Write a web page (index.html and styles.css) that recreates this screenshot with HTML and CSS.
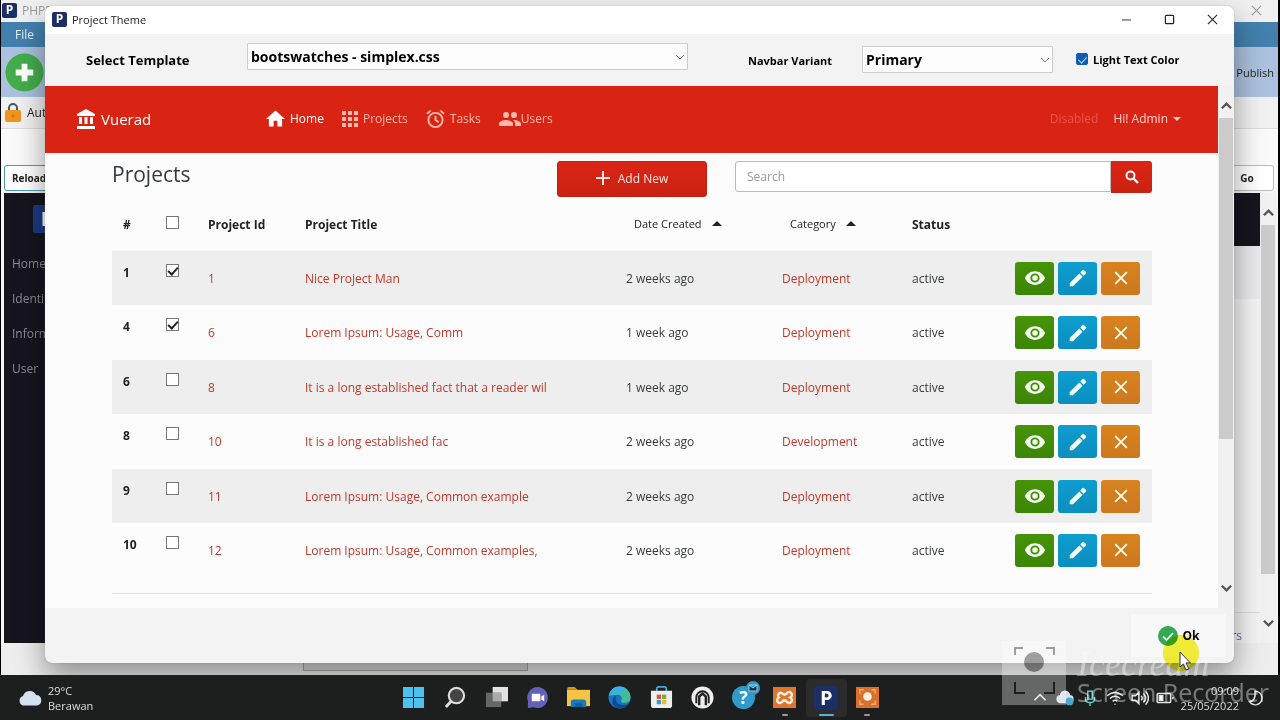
FILE: index.html
```html
<!DOCTYPE html>
<html lang="en">
<head>
  <meta charset="UTF-8" />
  <meta name="viewport" content="width=device-width, initial-scale=1.0" />
  <title>Project Theme</title>
  <link rel="stylesheet" href="styles.css">
</head>
<body>
  <!-- Shared icons -->
  <svg class="sprite" aria-hidden="true">
    <symbol id="i-eye" viewBox="0 0 24 24"><path d="M12 4.500C7 4.500 2.700 7.600 1 12c1.700 4.400 6 7.500 11 7.500s9.300-3.100 11-7.500c-1.700-4.400-6-7.500-11-7.500zM12 17a5 5 0 1 1 0-10 5 5 0 0 1 0 10zm0-8a3 3 0 1 0 0 6 3 3 0 0 0 0-6z"/></symbol>
    <symbol id="i-pencil" viewBox="0 0 24 24"><path d="M3 17.500V21h3.500L17 10.500 13.500 7 3 17.500zM14.500 6l3.500 3.500 2.700-2.500a1.300 1.300 0 0 0 0-1.600l-2.200-2.200a1.300 1.300 0 0 0-1.600 0L14.500 6z"/></symbol>
    <symbol id="i-x" viewBox="0 0 24 24"><path d="M19 6.400 17.600 5 12 10.600 6.400 5 5 6.400l5.600 5.600L5 17.600 6.400 19l5.600-5.600 5.600 5.600 1.400-1.400-5.600-5.600z"/></symbol>
    <symbol id="i-down" viewBox="0 0 12 12"><path d="M2 4l4 4 4-4" fill="none" stroke="currentColor"/></symbol>
    <symbol id="i-scroll" viewBox="0 0 12 12"><path d="M1 3l5 5 5-5" fill="none" stroke="#555" stroke-width="2.500"/></symbol>
    <symbol id="i-close" viewBox="0 0 12 12"><path d="M1 1l10 10M11 1L1 11" fill="none" stroke="currentColor" stroke-width="1.200"/></symbol>
  </svg>

  <div class="desktop">
    <!-- Main application window -->
    <div class="app">
      <div class="app-title"><span class="logo">P</span><span>PHPR</span><button class="app-close" aria-label="Close app"><svg class="s11"><use href="#i-close"/></svg></button></div>
      <div class="app-menu"><a href="#">File</a></div>
      <div class="app-tools">
        <button class="add" aria-label="Add"><svg viewBox="0 0 40 40"><circle cx="20" cy="20" r="19.500" fill="#43ad4b"/><path d="M17 11h6v6h6v6h-6v6h-6v-6h-6v-6h6z" fill="#fff"/></svg></button>
        <a href="#">Publish</a>
      </div>
      <div class="app-auth">
        <svg viewBox="0 0 16 20"><path d="M4 9V5a4 4 0 0 1 8 0v4" fill="none" stroke="#46596a" stroke-width="2"/><rect y="7" width="16" height="12" rx="2" fill="#ef951f"/><circle cx="8" cy="13" r="1.500" fill="#d77912"/></svg>
        <span>Aut</span>
      </div>
      <div class="app-address"><button>Reload</button><button>Go</button></div>
      <div class="preview">
        <div class="side">
          <span class="logo logo-lg">P</span>
          <a href="#">Home</a><a href="#">Identi</a><a href="#">Inform</a><a href="#">User</a>
        </div>
        <div class="preview-main"><div class="preview-head"></div><div class="preview-body"></div><div class="preview-foot"><a href="#">rs</a></div></div>
        <div class="scroll"><svg class="s11 up"><use href="#i-scroll"/></svg><i></i><svg class="s11"><use href="#i-scroll"/></svg></div>
      </div>
      <div class="app-foot"><div></div></div>
    </div>

    <!-- Theme dialog -->
    <div class="dialog">
      <div class="dialog-title">
        <span class="logo">P</span><span class="dialog-name">Project Theme</span>
        <button aria-label="Minimize"><svg class="s11" viewBox="0 0 12 12"><path d="M1 6.500h10" stroke="#222"/></svg></button>
        <button aria-label="Maximize"><svg class="s11" viewBox="0 0 12 12"><rect x="1.500" y="1.500" width="9" height="9" rx="1" fill="none" stroke="#222" stroke-width="1.300"/></svg></button>
        <button aria-label="Close"><svg class="s11"><use href="#i-close"/></svg></button>
      </div>

      <div class="options">
        <label class="label-template" for="template">Select Template</label>
        <div class="pick pick-template">
          <select id="template"><option>bootswatches - simplex.css</option></select>
          <svg><use href="#i-down"/></svg>
        </div>
        <label class="label-variant" for="variant">Navbar Variant</label>
        <div class="pick pick-variant">
          <select id="variant"><option>Primary</option></select>
          <svg><use href="#i-down"/></svg>
        </div>
        <label class="light"><input type="checkbox" checked>Light Text Color</label>
      </div>

      <div class="view">
        <div class="page">
          <nav class="navbar">
            <a class="brand" href="#"><svg viewBox="0 0 20 20" fill="currentColor"><path d="M10 0 1 5v2h18V5zM3 8h3v7H3zM8.500 8h3v7h-3zM14 8h3v7h-3zM1 17h18v3H1z"/></svg>Vuerad</a>
            <a class="link active" href="#"><svg class="i-home" viewBox="0 0 20 18" fill="currentColor"><path d="M8 17.500v-6h4v6h5V9.500h3L10 .5 0 9.500h3v8z"/></svg>Home</a>
            <a class="link" href="#"><svg class="i-grid" viewBox="0 0 16 16" fill="currentColor"><path d="M0 0h4v4H0zM6 0h4v4H6zM12 0h4v4h-4zM0 6h4v4H0zM6 6h4v4H6zM12 6h4v4h-4zM0 12h4v4H0zM6 12h4v4H6zM12 12h4v4h-4z"/></svg>Projects</a>
            <a class="link" href="#"><svg class="i-alarm" viewBox="0 0 20 20" fill="none" stroke="currentColor" stroke-width="2"><circle cx="10" cy="11" r="7.500"/><path d="M10 6.500V11l3.500 2.500M1 4.500 5 1.200M19 4.500 15 1.200"/></svg>Tasks</a>
            <a class="link users" href="#"><svg class="i-users" viewBox="1 4 22 16" fill="currentColor"><path d="M16 11a3 3 0 1 0 0-6 3 3 0 0 0 0 6zM8 11a3 3 0 1 0 0-6 3 3 0 0 0 0 6zM8 13c-2.300 0-7 1.200-7 3.500V19h14v-2.500C15 14.200 10.300 13 8 13zM16 13h-1c1.200.8 2 2 2 3.500V19h6v-2.500c0-2.300-4.700-3.500-7-3.500z"/></svg>Users</a>
            <span class="disabled">Disabled</span>
            <a class="user" href="#">Hi! Admin</a>
          </nav>

          <main class="content">
            <div class="head">
              <h1>Projects</h1>
              <button class="add-new"><svg viewBox="0 0 14 14"><path d="M7 0v14M0 7h14" stroke="currentColor" stroke-width="2"/></svg>Add New</button>
              <form class="search">
                <input type="text" placeholder="Search" aria-label="Search">
                <button type="button" aria-label="Search projects"><svg viewBox="0 0 14 14"><circle cx="5.500" cy="5.500" r="4" fill="none" stroke="#fff" stroke-width="2"/><path d="M8.500 8.500l4.500 4.500" stroke="#fff" stroke-width="2.400"/></svg></button>
              </form>
            </div>

            <table>
              <colgroup><col class="c-num"><col class="c-check"><col class="c-id"><col><col class="c-date"><col class="c-cat"><col class="c-status"><col class="c-act"></colgroup>
              <thead>
                <tr>
                  <th>#</th>
                  <th class="check"><input type="checkbox" aria-label="Select all"></th>
                  <th>Project Id</th>
                  <th>Project Title</th>
                  <th><button class="sort">Date Created</button></th>
                  <th><button class="sort">Category</button></th>
                  <th>Status</th>
                  <th></th>
                </tr>
              </thead>
              <tbody id="rows"></tbody>
            </table>
          </main>
        </div>
        <div class="scroll dialog-scroll"><svg class="s11 up"><use href="#i-scroll"/></svg><i></i><svg class="s11"><use href="#i-scroll"/></svg></div>
      </div>

      <div class="dialog-foot">
        <button class="ok"><svg viewBox="0 0 20 20"><circle cx="10" cy="10" r="10" fill="#35a853"/><path d="M5 10.500l3.500 3.500L15 7" fill="none" stroke="#d9ffe0" stroke-width="1.800"/></svg>Ok</button>
      </div>
    </div>

    <!-- Taskbar -->
    <div class="taskbar">
      <div class="weather">
        <svg viewBox="0 0 24 16"><path d="M5 15.500a5 5 0 0 1 0-9.500 7 7 0 0 1 13-1 5.300 5.300 0 0 1 1 10.500z" fill="#d3e2f1"/></svg>
        <div>29°C<br>Berawan</div>
      </div>
      <div class="apps">
        <button aria-label="Start"><svg viewBox="0 0 24 24" fill="#4cc2ee"><path d="M1 1h10.500v10.500H1zM12.500 1H23v10.500H12.500zM1 12.500h10.500V23H1zM12.500 12.500H23V23H12.500z"/></svg></button>
        <button aria-label="Find"><svg viewBox="0 0 24 24"><circle cx="14" cy="10" r="8" fill="#444" stroke="#ddd" stroke-width="2.200"/><path d="M8.500 16 3 22" stroke="#ddd" stroke-width="3"/></svg></button>
        <button aria-label="Task view"><svg viewBox="0 0 24 24"><path d="M8 1h16v15H8z" fill="#e2e2e2"/><path d="M1 7h16v15H1z" fill="#666"/><path d="M8 7h9v9H8z" fill="#aaa"/></svg></button>
        <button aria-label="Chat"><svg viewBox="0 0 24 24"><path d="M12 1a11 11 0 1 1-4 21.300L2 23V16A11 11 0 0 1 12 1z" fill="#6461b8"/><rect x="6" y="8" width="9" height="8" rx="1" fill="#fff"/><path d="M16 11l3-2v7l-3-2z" fill="#fff"/></svg></button>
        <button aria-label="Files"><svg viewBox="0 0 24 24"><path d="M0 3q0-2 2-2h6l3 3h-11z" fill="#d99522"/><path d="M0 4h24v17H0z" fill="#f6c445"/><path d="M4 22v-5q0-3 3-3h10q3 0 3 3v5z" fill="#1679bb"/><path d="M8 18h8v4H8z" fill="#0d5f9c"/></svg></button>
        <button aria-label="Browser"><svg viewBox="0 0 24 24"><circle cx="12" cy="12" r="11.500" fill="#1874c5"/><path d="M1 10C2 4 7 .5 12 .5A11.500 11.500 0 0 1 23.500 12c0 4-3 5.500-6.500 5.500-3 0-4-1.500-3-3 1.500-2 0-5.500-4-5.500-4 0-7 1-9 1z" fill="#42bd96"/><path d="M1 10C2 4 7 .5 12 .5c3 0 5 1 6 2-3 4-6 5-9 6-4 0-6 1-8 1.500z" fill="#38b1e5"/><path d="M8 13c0 6 7 9 14 5-4 7-13 7-17 1-1-4 0-8 4-9-1 1-1 2-1 3z" fill="#124a8f"/></svg></button>
        <button aria-label="Store"><svg viewBox="0 0 24 24"><path d="M7 6V3q0-2 2-2h6q2 0 2 2v3" fill="none" stroke="#41a9d8" stroke-width="1.800"/><path d="M1 5h22v15q0 3-3 3H4q-3 0-3-3z" fill="#eee"/><path d="M7 9h4.500v4.500H7z" fill="#e75336"/><path d="M12.500 9H17v4.500h-4.500z" fill="#79ae3c"/><path d="M7 14.500h4.500V19H7z" fill="#389bd6"/><path d="M12.500 14.500H17V19h-4.500z" fill="#edb82e"/></svg></button>
        <button aria-label="Launcher"><svg viewBox="0 0 24 24"><circle cx="12" cy="12" r="11.500" fill="#eee"/><path d="M5.500 18v-6a6.500 6.500 0 0 1 13 0v6" fill="none" stroke="#222" stroke-width="2"/><path d="M8.500 20v-9l3.500-3 3.500 3v9" fill="none" stroke="#222" stroke-width="2.500"/></svg></button>
        <button class="help" aria-label="Help"><b>?</b><svg viewBox="0 0 14 14"><circle cx="7" cy="7" r="7" fill="#3598c8"/><path d="M3 4h8v6H3zM3 4l4 3 4-3" fill="#16303f" stroke="#8ad0f0"/></svg></button>
        <button class="run" aria-label="Server"><svg viewBox="0 0 24 24"><path d="M0 1h24v22H0z" fill="#df752f"/><path d="M8 7a3 3 0 0 0-2 5 3 3 0 1 0 4 4q2-2 4 0a3 3 0 1 0 4-4 3 3 0 1 0-4-4q-2 2-4 0a3 3 0 0 0-2-1z" fill="none" stroke="#fff0df" stroke-width="2.500"/></svg></button>
        <button class="run current" aria-label="Project app"><span class="logo logo-lg">P</span></button>
        <button class="run" aria-label="Recorder"><svg viewBox="0 0 24 24"><path d="M0 1h24v22H0z" fill="#d9702c"/><circle cx="12" cy="11" r="4.500" fill="#fff2e4"/><path d="M4 8V4h4M16 4h4v4M4 15v4h4M16 19h4v-4" fill="none" stroke="#f1ac7c" stroke-width="1.500"/></svg></button>
      </div>
      <div class="tray">
        <svg viewBox="0 0 16 16"><path d="M3 10l5-5 5 5"/></svg>
        <svg viewBox="0 0 16 16"><path d="M4 12a3 3 0 0 1 0-6 4 4 0 0 1 8 0 3 3 0 0 1 0 6z" fill="#c9dfec"/><circle cx="12" cy="11" r="3.500" fill="#4aa8d8" stroke="none"/></svg>
        <svg class="mic" viewBox="0 0 16 16"><path d="M6 2h4v7H6zM4 7v2q0 3 4 3t4-3V7M8 12v3"/></svg>
        <svg viewBox="0 0 16 16"><path d="M1 6q7-6 14 0M3.500 8.500q4.500-4 9 0M6 11q2-2 4 0M8 13v1"/></svg>
        <svg viewBox="0 0 16 16"><path d="M1 6h3l3-3v10l-3-3H1zM9 6q2 2 0 4M11 4q4 4 0 8M13 2q5 6 0 12"/></svg>
        <svg viewBox="0 0 16 16"><rect x="1" y="4" width="12" height="8" rx="1"/><path d="M3 6h3v4H3z" fill="#fff"/><path d="M15 7v2"/></svg>
        <div class="clock">09:09<br>25/05/2022</div>
        <svg viewBox="0 0 16 16"><path d="M8 2a6 6 0 1 1-5 9q6 0 5-9z"/></svg>
      </div>
    </div>

    <!-- Recorder overlay and pointer -->
    <div class="mark">
      <svg viewBox="0 0 64 64"><path d="M0 0h64v64H0z" fill="#fff" opacity=".8"/><circle cx="32" cy="21" r="10" fill="#222"/><path d="M13 41v11h10M52 41v11H42M13 14V7h8M52 14V7h-8" fill="none" stroke="#222" stroke-width="2"/></svg>
      <div><em>Icecream</em><span>Screen Recorder</span></div>
    </div>
    <div class="glow"></div>
    <svg class="pointer" viewBox="0 0 12 20"><path d="M1 1v15l3.500-3 2.500 6 3-1-3-6h4.500z" fill="#fff" stroke="#333"/></svg>
  </div>

  <script>
    const projects = [
      [1, 1, "Nice Project Man", "2 weeks ago", "Deployment", true],
      [4, 6, "Lorem Ipsum: Usage, Comm", "1 week ago", "Deployment", true],
      [6, 8, "It is a long established fact that a reader wil", "1 week ago", "Deployment", false],
      [8, 10, "It is a long established fac", "2 weeks ago", "Development", false],
      [9, 11, "Lorem Ipsum: Usage, Common example", "2 weeks ago", "Deployment", false],
      [10, 12, "Lorem Ipsum: Usage, Common examples,", "2 weeks ago", "Deployment", false]
    ];

    document.getElementById("rows").innerHTML = projects.map(([num, id, title, date, category, checked]) => `
      <tr>
        <th>${num}</th>
        <td class="check"><input type="checkbox" aria-label="Select project ${id}" ${checked ? "checked" : ""}></td>
        <td><a href="#">${id}</a></td>
        <td><a href="#">${title}</a></td>
        <td>${date}</td>
        <td><a href="#">${category}</a></td>
        <td>active</td>
        <td><div class="actions">
          <button class="view-btn" aria-label="View"><svg><use href="#i-eye"/></svg></button>
          <button class="edit-btn" aria-label="Edit"><svg><use href="#i-pencil"/></svg></button>
          <button class="delete-btn" aria-label="Delete"><svg><use href="#i-x"/></svg></button>
        </div></td>
      </tr>`).join("");
  </script>
</body>
</html>
```
FILE: styles.css
```css
* { margin: 0; padding: 0; box-sizing: border-box; }
body {
  font-family: "Open Sans", "Noto Sans", sans-serif;
  font-size: 12px;
  color: #222;
  background: #000;
}
a { color: inherit; text-decoration: none; }
button { font: inherit; color: inherit; border: none; background: none; }
svg { flex: none; }
.sprite { position: absolute; width: 0; height: 0; }
.s11 { width: 11px; height: 11px; }

.desktop {
  position: relative;
  display: flex;
  flex-direction: column;
  height: 100vh;
  overflow: hidden;
}
.logo {
  display: grid;
  place-items: center;
  width: 15px;
  height: 15px;
  border-radius: 2px;
  background: #1b2e66;
  color: #fff;
  font-weight: bold;
  font-size: 12px;
  line-height: 1;
}
.logo-lg { width: 24px; height: 24px; font-size: 20px; }

/* main application */
.app {
  flex: 1;
  display: flex;
  flex-direction: column;
  margin: 0 2px 0 1px;
  background: #f4f4f4;
  min-height: 0;
}
.app-title {
  display: flex;
  align-items: center;
  gap: 5px;
  height: 22px;
  padding: 0 16px 2px 1px;
  background: #f0f0f0;
  color: #999;
}
.app-close { margin-left: auto; line-height: 0; }
.app-menu {
  height: 25px;
  padding-left: 14px;
  background: #4380ad;
  color: #e3f0f8;
  line-height: 25px;
}
.app-tools {
  display: flex;
  align-items: center;
  justify-content: space-between;
  height: 50px;
  padding: 0 4px;
  background: #abc1dd;
  font-size: 11px;
}
.add { width: 39px; height: 39px; }
.app-auth {
  display: flex;
  align-items: center;
  gap: 6px;
  height: 31px;
  padding-left: 4px;
  background: #f1f1f1;
}
.app-auth svg { width: 16px; height: 20px; }
.app-address {
  display: flex;
  align-items: flex-end;
  justify-content: space-between;
  height: 63px;
  padding: 0 4px 0 3px;
  border-top: 1px solid #ddd;
  background: #fafafa;
}
.app-address button {
  width: 54px;
  height: 26px;
  border: 1px solid #bbb;
  border-radius: 3px;
  background: #fff;
  font-size: 10px;
  font-weight: bold;
}
.app-address button:first-child { border-color: #4b9eb5; text-align: left; padding-left: 7px; }
.preview {
  flex: 1;
  display: flex;
  margin: 2px 2px 0 3px;
}
.side {
  display: flex;
  flex-direction: column;
  gap: 17px;
  width: 200px;
  padding: 12px 8px;
  background: #16141d;
  color: #8b8b90;
}
.side .logo { width: 28px; height: 28px; margin: 0 0 5px 21px; background: #1b3a86; }
.side a { line-height: 18px; }
.preview-main { flex: 1; display: flex; flex-direction: column; }
.preview-head { height: 53px; background: #16141d; }
.preview-body { height: 53px; background: #e9e9ee; }
.preview-foot {
  height: 31px;
  margin-top: auto;
  padding: 15px 18px 0 0;
  border-top: 1px solid #ddd;
  color: #4470b5;
  text-align: right;
  line-height: 16px;
}
.scroll {
  display: flex;
  flex-direction: column;
  align-items: center;
  justify-content: space-between;
  width: 16px;
  padding: 14px 0;
  background: #f1f1f1;
}
.scroll i { flex: 1; width: 14px; margin: 7px 0 44px; background: #cbcbcb; }
.up { transform: rotate(180deg); }
.app-foot { height: 32px; padding-left: 302px; background: #eee; }
.app-foot div { width: 225px; height: 28px; background: #ddd; border: 1px solid #aaa; }

/* dialog window */
.dialog {
  position: absolute;
  inset: 6px 46px 57px 45px;
  display: flex;
  flex-direction: column;
  border-radius: 7px;
  overflow: hidden;
  background: #f3f3f3;
  box-shadow: 0 0 1px #777, 0 14px 30px rgba(0, 0, 0, 0.4);
}
.dialog-title {
  display: flex;
  align-items: center;
  height: 28px;
  padding: 0 0 2px 7px;
  background: #fff;
  font-size: 11px;
}
.dialog-name { flex: 1; margin-left: 5px; }
.dialog-title button { width: 43px; line-height: 0; }
.options {
  display: flex;
  align-items: center;
  height: 52px;
  padding: 0 41px;
  color: #000;
  font-size: 11px;
  font-weight: bold;
}
.label-template { width: 161px; font-size: 13px; }
.label-variant { width: 114px; margin-left: 60px; }
.pick { position: relative; }
.pick select {
  appearance: none;
  width: 100%;
  height: 27px;
  padding: 0 3px;
  border: 1px solid #ccc;
  border-radius: 1px;
  background: #fdfdfd;
  color: #000;
  font: bold 14px "Open Sans", "Noto Sans", sans-serif;
}
.pick svg { position: absolute; right: 2px; top: 8px; width: 12px; height: 12px; color: #777; }
.pick-template { flex: 0 1 441px; margin-bottom: 8px; }
.pick-variant { flex: 0 1 191px; margin-bottom: 2px; }
.light { display: flex; align-items: center; gap: 5px; margin-left: 23px; margin-bottom: 2px; }
.view { flex: 1; display: flex; min-height: 0; }
.page { flex: 1; background: #fcfcfc; overflow: hidden; }
.dialog-scroll i { margin: 7px 0 144px; }

/* checkboxes */
input[type="checkbox"] {
  appearance: none;
  display: block;
  position: relative;
  width: 13px;
  height: 13px;
  border: 1px solid #777;
  background: #fff;
}
input[type="checkbox"]:checked::after {
  content: "";
  position: absolute;
  left: 3px;
  top: 0;
  width: 4px;
  height: 8px;
  border: solid #222;
  border-width: 0 2px 2px 0;
  transform: rotate(42deg);
}
.light input[type="checkbox"] { width: 12px; height: 12px; border-color: #0f5eb3; border-radius: 2px; background: #0f5eb3; }
.light input[type="checkbox"]:checked::after { top: 1px; height: 7px; border-color: #b9dcff; border-width: 0 1px 1px 0; }

/* navbar */
.navbar {
  display: flex;
  align-items: center;
  height: 67px;
  padding: 0 37px 2px 31px;
  background: #d92313;
  color: #fff;
}
.brand { display: flex; align-items: center; gap: 5px; width: 190px; font-size: 15px; }
.brand svg { width: 20px; height: 20px; }
.link { display: flex; align-items: center; gap: 5px; margin-right: 18px; color: #ffb9ae; }
.link.active { color: #fff; }
.i-home { width: 19px; height: 17px; }
.i-grid { width: 16px; height: 16px; }
.i-alarm { width: 19px; height: 20px; }
.i-users { width: 22px; height: 16px; }
.users { gap: 0; }
.disabled { margin-left: auto; color: #ea5549; }
.user { display: flex; align-items: center; gap: 5px; margin-left: 15px; color: #ffd0c9; }
.user::after { content: ""; border: 4px solid transparent; border-top-color: currentColor; border-bottom: none; }

/* page content */
.content { padding: 8px 66px 0 67px; color: #373a3c; }
.head { display: flex; align-items: flex-start; height: 36px; }
h1 { flex: 1; font-size: 21px; line-height: 26px; font-weight: normal; }
.add-new {
  display: flex;
  align-items: center;
  justify-content: center;
  gap: 8px;
  width: 150px;
  height: 36px;
  padding-bottom: 2px;
  border: 1px solid #c11e10;
  border-radius: 3px;
  background: linear-gradient(#db2515, #c92212);
  color: #ffe5e1;
}
.add-new svg { width: 14px; height: 14px; }
.search { display: flex; width: 417px; margin-left: 28px; }
.search input {
  flex: 1;
  min-width: 0;
  height: 31px;
  padding: 0 11px;
  border: 1px solid #bbb;
  border-radius: 3px 0 0 3px;
  background: #fff;
  font: inherit;
}
.search input::placeholder { color: #999; }
.search button {
  width: 41px;
  height: 32px;
  border-radius: 0 3px 3px 0;
  background: linear-gradient(#db2515, #c92212);
  line-height: 0;
}
.search svg { width: 14px; height: 14px; }
table { width: 100%; table-layout: fixed; border-collapse: collapse; border-bottom: 1px solid #e2e2e2; }
.c-num { width: 43px; }
.c-check { width: 42px; }
.c-id { width: 97px; }
.c-date { width: 156px; }
.c-cat { width: 130px; }
.c-status { width: 103px; }
.c-act { width: 148px; }
th, td { height: 54px; padding: 0 11px; text-align: left; white-space: nowrap; }
thead th { color: #222; }
tbody th { padding-top: 13px; vertical-align: top; color: #222; }
.check { padding-top: 13px; vertical-align: top; }
thead .check { padding-top: 19px; }
tbody tr:nth-child(odd) { background: #eee; }
tbody tr:nth-child(even) td { height: 55px; }
tbody tr:last-child td { height: 54px; }
tbody::after { content: ""; display: block; height: 16px; }
td a { color: #c0392b; }
.sort { display: flex; align-items: center; gap: 10px; padding: 0 0 2px 8px; font-size: 11px; font-weight: normal; }
.sort::after { content: ""; border: 5px solid transparent; border-bottom-color: #222; border-top: none; }
.actions { display: flex; gap: 4px; }
.actions button {
  width: 39px;
  height: 33px;
  border-radius: 3px;
  line-height: 0;
}
.actions svg { width: 22px; height: 22px; fill: #f4ffef; }
.view-btn { background: linear-gradient(#469408, #3c8505); }
.edit-btn { background: linear-gradient(#0f9dcf, #0b8ec0); }
.delete-btn { background: linear-gradient(#d9831f, #cc781e); }
.dialog-foot { display: flex; justify-content: flex-end; height: 55px; padding: 6px 8px; }
.ok {
  display: flex;
  align-items: center;
  justify-content: center;
  gap: 5px;
  width: 95px;
  background: #f8f8f8;
  color: #000;
  font-weight: bold;
}
.ok svg { width: 20px; height: 20px; }

/* taskbar */
.taskbar {
  display: flex;
  align-items: center;
  position: relative;
  height: 45px;
  padding: 0 16px 0 18px;
  background: #1d1e1e;
  color: #ddd;
  font-size: 11px;
  line-height: 15px;
}
.weather { display: flex; align-items: center; gap: 6px; width: 375px; }
.weather svg { width: 24px; height: 16px; }
.apps { display: flex; justify-content: space-between; width: 495px; }
.apps button {
  display: grid;
  place-items: center;
  position: relative;
  width: 41px;
  height: 38px;
}
.apps svg { width: 23px; height: 23px; }
.help b {
  width: 23px;
  height: 23px;
  border-radius: 50%;
  background: #2f9bcb;
  color: #fff;
  font-size: 18px;
  line-height: 23px;
}
.apps .help svg { position: absolute; top: 2px; right: 4px; width: 14px; height: 14px; }
.run::after {
  content: "";
  position: absolute;
  bottom: 1px;
  width: 6px;
  height: 2px;
  border-radius: 1px;
  background: #999;
}
.current { border-radius: 4px; background: #2b2b2b; }
.current::after { width: 15px; background: #51b2dd; }
.tray { display: flex; align-items: center; gap: 7px; margin-left: auto; }
.tray svg { width: 18px; height: 18px; fill: none; stroke: #e6e6e6; stroke-width: 1.3; }
.tray .mic { stroke: #68cbd0; }
.clock { text-align: right; }

.mark {
  position: absolute;
  left: 1002px;
  top: 641px;
  display: flex;
  gap: 11px;
  color: #fff;
  opacity: 0.4;
  white-space: nowrap;
  pointer-events: none;
}
.mark svg { width: 64px; height: 64px; }
.mark div { display: flex; flex-direction: column; padding-top: 9px; }
.mark em { font: italic 36px/28px "Liberation Serif", serif; }
.mark span { font-size: 25px; line-height: 28px; }
.glow {
  position: absolute;
  left: 1163px;
  top: 635px;
  width: 36px;
  height: 36px;
  border-radius: 50%;
  background: #f7f23a;
  mix-blend-mode: multiply;
  pointer-events: none;
}
.pointer { position: absolute; left: 1179px; top: 651px; width: 12px; height: 20px; pointer-events: none; }
```
